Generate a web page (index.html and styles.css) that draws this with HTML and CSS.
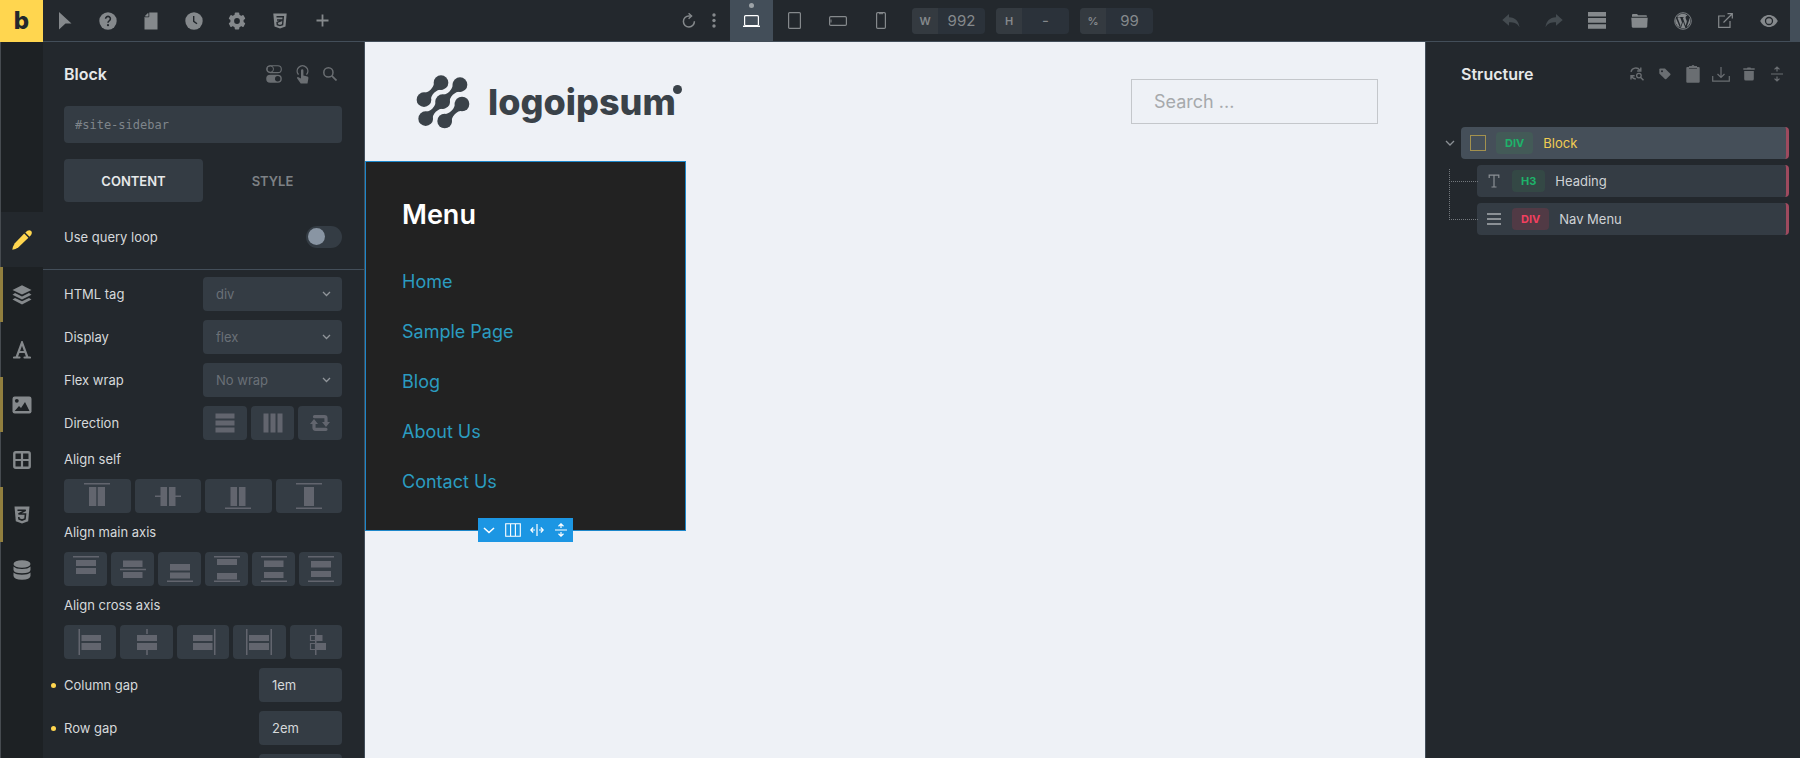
FILE: index.html
```html
<!DOCTYPE html>
<html lang="en">
<head>
<meta charset="utf-8">
<title>Builder</title>
<link rel="stylesheet" href="styles.css">
</head>
<body>
<div class="app">
  <header class="topbar">
    <div class="bar-group">
      <a class="brand" href="#">b</a>
      <button class="bar-btn" aria-label="Select"><svg width="14" height="18" viewBox="0 0 14 18"><path d="M1 0 13.500 11.500 7.500 11.500 1 17.500z" fill="currentColor"/></svg></button>
      <button class="bar-btn" aria-label="Help"><svg width="18" height="18" viewBox="0 0 18 18"><circle cx="9" cy="9" r="8.700" fill="currentColor"/><path d="M6.600 6.800a2.400 2.400 0 1 1 3.600 2.100c-.8.500-1.200.9-1.200 1.900" fill="none" stroke="#23282d" stroke-width="1.600"/><circle cx="9" cy="13.200" r="1.100" fill="#23282d"/></svg></button>
      <button class="bar-btn" aria-label="Pages"><svg width="14" height="18" viewBox="0 0 14 18"><path d="M5.500 0.500H13.500V17.500H.5V5.500z" fill="currentColor"/><path d="M4.800 1v3.800H1" fill="none" stroke="#23282d" stroke-width=".9"/><path d="M4.200.700v3.500H.7z" fill="currentColor"/></svg></button>
      <button class="bar-btn" aria-label="History"><svg width="18" height="18" viewBox="0 0 18 18"><circle cx="9" cy="9" r="8.700" fill="currentColor"/><path d="M8.700 4v5.300l3.300 2.500" fill="none" stroke="#23282d" stroke-width="1.400"/></svg></button>
      <button class="bar-btn" aria-label="Settings"><svg width="18" height="18" viewBox="0 0 18 18"><g fill="currentColor"><circle cx="9" cy="9" r="6.700"/><rect x="6.700" y=".5" width="4.600" height="17" rx="1"/><rect x="6.700" y=".5" width="4.600" height="17" rx="1" transform="rotate(60 9 9)"/><rect x="6.700" y=".5" width="4.600" height="17" rx="1" transform="rotate(120 9 9)"/></g><circle cx="9" cy="9" r="2.900" fill="#23282d"/></svg></button>
      <button class="bar-btn" aria-label="Stylesheets"><svg width="14" height="16" viewBox="0 0 14 16"><path d="M.3.500h13.400L12.500 13.500 7 15.500 1.500 13.500z" fill="currentColor"/><path d="M3.500 3.700h6.800l-.7 8-2.700.9-2.600-.9-.2-2.300 4.500-1.800M10 7H4" fill="none" stroke="#23282d" stroke-width="1.400"/></svg></button>
      <button class="bar-btn" aria-label="Add"><svg width="13" height="13" viewBox="0 0 13 13"><path d="M6.500.5v12M.5 6.500h12" stroke="currentColor" stroke-width="1.800"/></svg></button>
    </div>

    <div class="bar-group">
      <button class="mini-btn" aria-label="Reload"><svg width="14" height="15" viewBox="0 0 14 15"><path d="M12.400 8.300A5.500 5.500 0 1 1 7 3h2.300" fill="none" stroke="currentColor" stroke-width="1.500"/><path d="M6.600.3 9.600 3 6.600 5.700" fill="none" stroke="currentColor" stroke-width="1.400"/></svg></button>
      <button class="mini-btn dots" aria-label="More"><svg width="4" height="15" viewBox="0 0 4 15"><g fill="currentColor"><circle cx="2" cy="2" r="1.700"/><circle cx="2" cy="7.500" r="1.700"/><circle cx="2" cy="13" r="1.700"/></g></svg></button>
      <button class="bar-btn active" aria-label="Desktop"><svg width="17" height="12" viewBox="0 0 17 12"><rect x="1.600" y=".7" width="13.800" height="9.800" rx="1" fill="none" stroke="currentColor" stroke-width="1.200"/><path d="M0 11.300h17" stroke="currentColor" stroke-width="1.400"/></svg></button>
      <button class="bar-btn" aria-label="Tablet"><svg width="13" height="17" viewBox="0 0 13 17"><rect x=".6" y=".6" width="11.800" height="15.800" rx="1" fill="none" stroke="currentColor" stroke-width="1.200"/></svg></button>
      <button class="bar-btn" aria-label="Mobile landscape"><svg width="18" height="10" viewBox="0 0 18 10"><rect x=".6" y=".6" width="16.800" height="8.800" rx="1.200" fill="none" stroke="currentColor" stroke-width="1.200"/><path d="M2 3.500v3" stroke="currentColor"/></svg></button>
      <button class="bar-btn" aria-label="Mobile portrait"><svg width="10" height="17" viewBox="0 0 10 17"><rect x=".6" y=".6" width="8.800" height="15.800" rx="1.200" fill="none" stroke="currentColor" stroke-width="1.200"/><path d="M3 1.700h4" stroke="currentColor"/></svg></button>
      <div class="sizes">
        <label class="size"><span>W</span><input type="text" value="992"></label>
        <label class="size"><span>H</span><input type="text" value="-"></label>
        <label class="size"><span>%</span><input type="text" value="99"></label>
      </div>
    </div>

    <div class="bar-group">
      <button class="bar-btn faded" aria-label="Undo"><svg width="18" height="14" viewBox="0 0 18 14"><path d="M7 0v3.300c6.500.3 9.600 3.800 10.500 9.900C15.300 9.600 12.300 8.300 7 8.300v3.500L.3 5.900z" fill="currentColor"/></svg></button>
      <button class="bar-btn faded" aria-label="Redo"><svg width="18" height="14" viewBox="0 0 18 14"><path d="M11 0v3.300C4.500 3.600 1.400 7.100.5 13.200 2.700 9.600 5.700 8.300 11 8.300v3.500l6.700-5.900z" fill="currentColor"/></svg></button>
      <button class="bar-btn" aria-label="Structure"><svg width="18" height="17" viewBox="0 0 18 17"><path d="M0 0h18v4.500H0zM0 6h18v4.700H0zM0 12.200h18v4.500H0z" fill="currentColor"/></svg></button>
      <button class="bar-btn" aria-label="Templates"><svg width="17" height="14" viewBox="0 0 17 14"><path d="M1 2.700V1q0-1 1-1h4l1.200 1.300H15q1 0 1 1.400z" fill="currentColor"/><path d="M.3 3.700h16.400l-.5 8.800q-.1 1.200-1.300 1.200H2.100q-1.200 0-1.300-1.200z" fill="currentColor"/></svg></button>
      <a class="bar-btn" href="#" aria-label="WordPress"><svg width="18" height="18" viewBox="0 0 18 18"><circle cx="9" cy="9" r="8.300" fill="none" stroke="currentColor" stroke-width=".9"/><path d="M1.900 6 6 16.300 8 10.300 6.200 5.600 5.200 5.500V4.900H9.900V5.500L8.700 5.600 11.600 13.800 12.700 10.200C13.200 8.500 11.700 7.300 11.600 5.700 11.500 4.500 12.400 3.500 13.600 3.400A7.200 7.200 0 0 0 3 4.900H4.800L4.600 5.500 3.400 5.600 6.400 13.300 6 16zM9.100 9.700 6.900 16A7.200 7.200 0 0 0 11.400 16zM15.400 5.600A7.200 7.200 0 0 1 12.600 15.200L15 8.500Q15.500 7 15.400 5.600zM1.900 6A7.200 7.200 0 0 0 5.900 15.500z" fill="currentColor"/></svg></a>
      <a class="bar-btn" href="#" aria-label="Open page"><svg width="15" height="15" viewBox="0 0 15 15"><path d="M7 3H.700v11.300H12V8M9.500.700h4.800v4.800M14 1 5.500 9.500" fill="none" stroke="currentColor" stroke-width="1.200"/></svg></a>
      <button class="bar-btn" aria-label="Preview"><svg width="18" height="12" viewBox="0 0 18 12"><path d="M.2 6C2 2.200 5.300 0 9 0s7 2.200 8.800 6c-1.800 3.800-5.100 6-8.800 6S2 9.800.2 6z" fill="currentColor"/><circle cx="9" cy="6" r="3.500" fill="none" stroke="#23282d" stroke-width="1.300"/></svg></button>
      <span class="save-edge"></span>
    </div>
  </header>

  <nav class="rail">
    <button class="rail-btn current" aria-label="Content"><svg width="20" height="20" viewBox="0 0 20 20"><g fill="currentColor"><path d="M12.200 3.600 16.400 7.800 6.500 17.200Q3.500 19.300.3 19.700.7 16.500 2.800 13.200z"/><path d="M13.300 2.500Q17-1.300 19.100 1.100 21.200 3.400 17.500 6.700z"/></g></svg></button>
    <button class="rail-btn marked" aria-label="Layout"><svg width="20" height="20" viewBox="0 0 20 20"><g fill="currentColor"><path d="M10 .3 19.500 5 10 9.500.500 5z"/><path d="M3 8.100.500 9.700 10 14.500 19.500 9.700 17 8.100 10 11.500z"/><path d="M3 12.900.500 14.600 10 19.400 19.500 14.600 17 12.900 10 16.300z"/></g></svg></button>
    <button class="rail-btn" aria-label="Typography"><svg width="18" height="18" viewBox="0 0 18 18"><path d="M3.700 16 9 1.500 14.300 16M5.500 11h7M1 16.500h5.500M11.500 16.500H17" fill="none" stroke="currentColor" stroke-width="2.200" stroke-linecap="round"/></svg></button>
    <button class="rail-btn marked" aria-label="Background"><svg width="20" height="18" viewBox="0 0 20 18"><rect x=".5" y=".5" width="19" height="17" rx="2.200" fill="currentColor"/><circle cx="4.800" cy="4.800" r="1.900" fill="#1d2124"/><path d="M2.700 15 7 10l2 2 4-6 4.500 9z" fill="#1d2124"/></svg></button>
    <button class="rail-btn" aria-label="Border"><svg width="18" height="18" viewBox="0 0 18 18"><rect x="1.300" y="1.300" width="15.400" height="15.400" rx="1.500" fill="none" stroke="currentColor" stroke-width="2.400"/><path d="M9 1v16M1 9h16" stroke="currentColor" stroke-width="2.200"/></svg></button>
    <button class="rail-btn marked" aria-label="CSS"><svg width="16" height="18" viewBox="0 0 16 18"><path d="M.5.500h15L14.200 15.200 8 17.500 1.800 15.200z" fill="currentColor"/><path d="M3.500 4.200h8.200L4.500 8h7l-.5 5-3 1.100L5 13l-.2-2" fill="none" stroke="#1d2124" stroke-width="1.600"/></svg></button>
    <button class="rail-btn" aria-label="Attributes"><svg width="18" height="20" viewBox="0 0 18 20"><g fill="currentColor"><ellipse cx="9" cy="4" rx="8.500" ry="3.800"/><path d="M.5 6.500Q3 9 9 9t8.500-2.500V10Q17 13.300 9 13.300T.5 10z"/><path d="M.5 12.500Q3 14.700 9 14.700t8.500-2.200V16Q17 19.700 9 19.700T.5 16z"/></g></svg></button>
  </nav>

  <aside class="panel">
    <div class="panel-head">
      <h2>Block</h2>
      <div class="head-icons">
        <button aria-label="Conditions"><svg width="16" height="18" viewBox="0 0 16 18"><rect x=".7" y=".7" width="14.600" height="6.900" rx="3.400" fill="none" stroke="currentColor" stroke-width="1.100"/><circle cx="4.300" cy="4.100" r="3.200" fill="none" stroke="currentColor"/><rect x=".2" y="9.800" width="15.600" height="8" rx="4" fill="currentColor"/><circle cx="11.700" cy="13.800" r="2.700" fill="#23282d"/></svg></button>
        <button aria-label="Interactions"><svg width="13" height="19" viewBox="0 0 13 19"><path d="M2.500 9.600A5.300 5.300 0 1 1 10.500 9.600" fill="none" stroke="currentColor" stroke-width="1.400"/><path d="M5 5.500q0-1.200 1.200-1.200t1.200 1.200v5l4 1q1.200.4 1 1.700L11.500 18.500H4.700L.9 13q.3-1.200 1.600-.8L5 13.500z" fill="currentColor"/></svg></button>
        <button aria-label="Search"><svg width="14" height="14" viewBox="0 0 14 14"><circle cx="5.400" cy="5.400" r="4.600" fill="none" stroke="currentColor" stroke-width="1.500"/><path d="m8.800 8.800 4.700 4.700" stroke="currentColor" stroke-width="1.700"/></svg></button>
      </div>
    </div>
    <input class="field id-field" type="text" placeholder="#site-sidebar" aria-label="Element ID">
    <div class="tabs">
      <button class="tab on">CONTENT</button>
      <button class="tab">STYLE</button>
    </div>
    <div class="loop-row">
      <label for="loop">Use query loop</label>
      <input class="switch" type="checkbox" id="loop">
    </div>

    <div class="controls">
      <div class="row"><label for="tag">HTML tag</label><div class="pick"><select id="tag"><option>div</option></select><svg width="9" height="6" viewBox="0 0 9 6"><path d="m1 1 3.500 3.500L8 1" fill="none" stroke="currentColor" stroke-width="1.300"/></svg></div></div>
      <div class="row"><label for="display">Display</label><div class="pick"><select id="display"><option>flex</option></select><svg width="9" height="6" viewBox="0 0 9 6"><path d="m1 1 3.500 3.500L8 1" fill="none" stroke="currentColor" stroke-width="1.300"/></svg></div></div>
      <div class="row"><label for="wrap">Flex wrap</label><div class="pick"><select id="wrap"><option>No wrap</option></select><svg width="9" height="6" viewBox="0 0 9 6"><path d="m1 1 3.500 3.500L8 1" fill="none" stroke="currentColor" stroke-width="1.300"/></svg></div></div>
      <div class="row"><span>Direction</span>
        <div class="set half">
          <button aria-label="Column"><svg width="20" height="20" viewBox="0 0 20 20"><path d="M.5.500h19v5H.5zM.5 7.500h19v5H.5zM.5 14.500h19v5H.5z" fill="currentColor"/></svg></button>
          <button aria-label="Row"><svg width="20" height="20" viewBox="0 0 20 20"><path d="M.5.500h5v19h-5zM7.500.500h5v19h-5zM14.500.500h5v19h-5z" fill="currentColor"/></svg></button>
          <button aria-label="Reverse"><svg width="20" height="18" viewBox="0 0 20 18"><path d="M4.500 2.700h10q1.500 0 1.500 1.500V9M16 15.300H5.500Q4 15.300 4 13.800V9" fill="none" stroke="currentColor" stroke-width="3.200" stroke-linecap="round"/><path d="M12 8h8l-4 5zM0 10h8L4 5z" fill="currentColor"/></svg></button>
        </div>
      </div>
      <div class="stack"><span>Align self</span>
        <div class="set">
          <button aria-label="Start"><svg width="26" height="26" viewBox="0 0 26 26"><path d="M0 0h26v1.500H0zM5 4h7.300v19H5zM13.700 4H21v19h-7.300z" fill="currentColor"/></svg></button>
          <button aria-label="Center"><svg width="26" height="26" viewBox="0 0 26 26"><path d="M0 12.500h5.500v1.500H0zM20.500 12.500H26v1.500h-5.500zM5.500 4H12v19H5.500zM14 4h6.500v19H14z" fill="currentColor"/></svg></button>
          <button aria-label="End"><svg width="26" height="26" viewBox="0 0 26 26"><path d="M0 24.500h26V26H0zM5.500 4H12v19H5.500zM14 4h6.500v19H14z" fill="currentColor"/></svg></button>
          <button aria-label="Stretch"><svg width="26" height="26" viewBox="0 0 26 26"><path d="M0 0h26v1.500H0zM0 24.500h26V26H0zM8 4h10v19H8z" fill="currentColor"/></svg></button>
        </div>
      </div>
      <div class="stack"><span>Align main axis</span>
        <div class="set">
          <button aria-label="Start"><svg width="26" height="26" viewBox="0 0 26 26"><path d="M0 0h26v1.500H0zM3 4h20v6H3zM3 12h20v6H3z" fill="currentColor"/></svg></button>
          <button aria-label="Center"><svg width="26" height="26" viewBox="0 0 26 26"><path d="M0 12.700h26v1.500H0zM3 4.500h19.500v6.500H3zM3 16h19.500v6H3z" fill="currentColor"/></svg></button>
          <button aria-label="End"><svg width="26" height="26" viewBox="0 0 26 26"><path d="M0 24.500h26V26H0zM3 8h20v6.500H3zM3 16.500h20v6H3z" fill="currentColor"/></svg></button>
          <button aria-label="Space between"><svg width="26" height="26" viewBox="0 0 26 26"><path d="M0 0h26v1.500H0zM0 24.500h26V26H0zM3 3h20v6H3zM3 17h20v6.500H3z" fill="currentColor"/></svg></button>
          <button aria-label="Space around"><svg width="26" height="26" viewBox="0 0 26 26"><path d="M0 0h26v1.500H0zM0 24.500h26V26H0zM3 4.500h19.500v6.500H3zM3 16h19.500v6H3z" fill="currentColor"/></svg></button>
          <button aria-label="Space evenly"><svg width="26" height="26" viewBox="0 0 26 26"><path d="M0 0h26v1.500H0zM0 24.500h26V26H0zM3 5h20v6.500H3zM3 15h20v6H3z" fill="currentColor"/></svg></button>
        </div>
      </div>
      <div class="stack"><span>Align cross axis</span>
        <div class="set">
          <button aria-label="Start"><svg width="26" height="26" viewBox="0 0 26 26"><path d="M1.500 0H3v26H1.500zM4.500 6H24v6H4.500zM4.500 14H24v7H4.500z" fill="currentColor"/></svg></button>
          <button aria-label="Center"><svg width="26" height="26" viewBox="0 0 26 26"><path d="M12.200 0h1.600v5h-1.600zM12.200 21h1.600v5h-1.600zM3 6h20v6H3zM3 14h20v7H3z" fill="currentColor"/></svg></button>
          <button aria-label="End"><svg width="26" height="26" viewBox="0 0 26 26"><path d="M24 0h1.500v26H24zM3 6h19.500v6H3zM3 14h19.500v7H3z" fill="currentColor"/></svg></button>
          <button aria-label="Stretch"><svg width="26" height="26" viewBox="0 0 26 26"><path d="M0 0h1.500v26H0zM24.500 0H26v26h-1.500zM3 6h20v6H3zM3 14h20v7H3z" fill="currentColor"/></svg></button>
          <button aria-label="Baseline"><svg width="26" height="26" viewBox="0 0 26 26"><path d="M12 0h1.500v26H12zM13 6h6.500v6H13zM13 14h10v7H13z" fill="currentColor"/><path d="M7.500 6.500h5v5h-5zM7.500 14.500h5v6h-5z" fill="none" stroke="currentColor" stroke-width="1.200"/></svg></button>
        </div>
      </div>
      <div class="row changed"><label for="colgap">Column gap</label><input class="field small" id="colgap" type="text" value="1em"></div>
      <div class="row changed"><label for="rowgap">Row gap</label><input class="field small" id="rowgap" type="text" value="2em"></div>
      <div class="row end"><input class="field small" type="text" aria-label="Flex grow"></div>
    </div>
  </aside>

  <main class="canvas">
    <div class="site-head">
      <a class="logo" href="#">
        <svg width="54" height="54" viewBox="34 28 160 162"><g fill="currentColor"><circle cx="108" cy="51" r="22"/><circle cx="165" cy="57" r="22"/><circle cx="57" cy="102" r="22"/><circle cx="113" cy="108" r="22"/><circle cx="171" cy="115" r="22"/><circle cx="62" cy="159" r="22"/><circle cx="119" cy="166" r="22"/>
        <path transform="translate(57 102) rotate(-45)" d="M10-19Q20-7 36-7T62-19V19Q52 7 36 7T10 19z"/>
        <path transform="translate(113 108) rotate(-45)" d="M10-19Q20-7 36-7T62-19V19Q52 7 36 7T10 19z"/>
        <path transform="translate(62 159) rotate(-45)" d="M10-19Q20-7 36-7T62-19V19Q52 7 36 7T10 19z"/>
        <path transform="translate(119 166) rotate(-45)" d="M10-19Q20-7 36-7T62-19V19Q52 7 36 7T10 19z"/></g></svg>
        <span class="wordmark">logoipsum</span>
      </a>
      <input class="site-search" type="search" placeholder="Search ..." aria-label="Search">
    </div>
    <section class="site-sidebar">
      <h3>Menu</h3>
      <a href="#">Home</a>
      <a href="#">Sample Page</a>
      <a href="#">Blog</a>
      <a href="#">About Us</a>
      <a href="#">Contact Us</a>
      <div class="quick">
        <button aria-label="Collapse"><svg width="12" height="7" viewBox="0 0 12 7"><path d="m1 1 5 4.500L11 1" fill="none" stroke="currentColor" stroke-width="1.600"/></svg></button>
        <button aria-label="Columns"><svg width="16" height="14" viewBox="0 0 16 14"><path d="M.7.700h14.600v12.600H.7zM5.600 1v12M10.400 1v12" fill="none" stroke="currentColor" stroke-width="1.100"/></svg></button>
        <button aria-label="Width"><svg width="14" height="14" viewBox="0 0 14 14"><path d="M7 1v12M5 7H.8M9 7h4.200M3.200 4.500.8 7l2.400 2.500M10.800 4.500 13.200 7l-2.400 2.500" fill="none" stroke="currentColor" stroke-width="1.200"/></svg></button>
        <button aria-label="Height"><svg width="14" height="14" viewBox="0 0 14 14"><path d="M1 7h12M7 5V.8M7 9v4.200M4.500 3.200 7 .8l2.500 2.400M4.500 10.800 7 13.200l2.500-2.400" fill="none" stroke="currentColor" stroke-width="1.200"/></svg></button>
      </div>
    </section>
  </main>

  <aside class="structure">
    <div class="panel-head">
      <h2>Structure</h2>
      <div class="head-icons tools">
        <button aria-label="Find and replace"><svg width="14" height="14" viewBox="0 0 14 14"><path d="M1 4.800A4.900 4.900 0 0 1 9.800 3.200M10.800.500V4H7.200M1 12.500V8.700h3.600M1.400 9.200Q2.800 11.800 5.800 12" fill="none" stroke="currentColor" stroke-width="1.400"/><circle cx="8.900" cy="8.600" r="2.300" fill="none" stroke="currentColor" stroke-width="1.300"/><path d="m10.500 10.300 3 3" stroke="currentColor" stroke-width="1.500"/></svg></button>
        <button aria-label="Classes"><svg width="12" height="12" viewBox="0 0 12 12"><path d="M.3 1.500Q.3.500 1.300.500H6l5.300 5.200q.6.700 0 1.400L7.300 11q-.7.600-1.400 0L.3 5.500z" fill="currentColor"/><circle cx="3" cy="3.200" r="1" fill="#23282d"/></svg></button>
        <button aria-label="Paste"><svg width="14" height="18" viewBox="0 0 14 18"><path d="M.3 3q0-1 1-1H3V1h2.500Q7-.8 8.500 1H11v1h1.700q1 0 1 1v13.700q0 1-1 1H1.300q-1 0-1-1z" fill="currentColor"/><path d="M3 3.500h8" stroke="#23282d" stroke-width=".6"/></svg></button>
        <button aria-label="Save"><svg width="18" height="15" viewBox="0 0 18 15"><path d="M.7 9v5.200h16.600V9M9 0v10.300M5.500 7 9 10.500 12.500 7" fill="none" stroke="currentColor" stroke-width="1.200"/></svg></button>
        <button aria-label="Delete"><svg width="12" height="14" viewBox="0 0 12 14"><path d="M.3 1.300h3.700L4.500.400h3l.5.900h3.700v1.400H.3zM1.200 4h9.600v8q0 1.500-1.500 1.500H2.700Q1.200 13.500 1.200 12z" fill="currentColor"/></svg></button>
        <button aria-label="Expand"><svg width="14" height="16" viewBox="0 0 14 16"><path d="M1 8h12M7 5.500V1M7 10.500V15M4.500 3.400 7 1l2.500 2.400M4.500 12.600 7 15l2.500-2.400" fill="none" stroke="currentColor" stroke-width="1.200"/></svg></button>
      </div>
    </div>
    <ul class="tree">
      <li class="node selected"><svg class="fold" width="10" height="7" viewBox="0 0 10 7"><path d="m1 1 4 4 4-4" fill="none" stroke="currentColor" stroke-width="1.300"/></svg><span class="square"></span><span class="chip">DIV</span>Block</li>
      <li class="node child first"><svg width="12" height="14" viewBox="0 0 12 14"><path d="M1.200 4V1.200h9.600V4M6 1.200v11.600M3.500 13h5" fill="none" stroke="currentColor" stroke-width="1.200"/></svg><span class="chip">H3</span>Heading</li>
      <li class="node child"><svg width="14" height="12" viewBox="0 0 14 12"><path d="M0 1h14M0 6h14M0 11h14" stroke="currentColor" stroke-width="1.900"/></svg><span class="chip red">DIV</span>Nav Menu</li>
    </ul>
  </aside>
</div>
</body>
</html>
```

FILE: styles.css
```css
* { box-sizing: border-box; }

body {
  margin: 0;
  font-family: Inter, "Liberation Sans", sans-serif;
  font-size: 13px;
  color: #d6d9db;
  background: #23282d;
}

button, input, select {
  font: inherit;
  color: inherit;
  border: 0;
  padding: 0;
  background: none;
  border-radius: 0;
}

a { text-decoration: none; color: inherit; }
svg { display: block; flex: none; }
h2, h3, ul { margin: 0; padding: 0; }

.app {
  display: grid;
  grid-template: auto minmax(0, 1fr) / 43px 322px minmax(0, 1fr) 375px;
  height: 100vh;
  overflow: hidden;
}

/* Top bar */
.topbar {
  grid-column: 1 / -1;
  display: flex;
  justify-content: space-between;
  height: 42px;
  border-bottom: 1px solid #434e59;
  color: #85898c;
}
.bar-group { display: flex; align-items: stretch; }
.brand {
  display: flex;
  align-items: center;
  justify-content: center;
  width: 43px;
  height: 42px;
  background: #ffd64f;
  color: #23282d;
  font-size: 24px;
  font-weight: 800;
  line-height: 24px;
}
.bar-btn, .mini-btn {
  display: flex;
  align-items: center;
  justify-content: center;
  width: 43px;
}
.mini-btn { width: 26px; }
.mini-btn.dots { width: 23px; margin-right: 5px; }
.bar-btn.active {
  position: relative;
  background: #434e59;
  color: #fff;
}
.bar-btn.active::before {
  content: "";
  position: absolute;
  top: 3px;
  left: 19px;
  width: 5px;
  height: 5px;
  border-radius: 50%;
  background: #9da3a8;
}
.bar-btn.faded { color: #444b50; }
.sizes {
  display: flex;
  align-items: center;
  gap: 11px;
  padding: 0 4px 0 10px;
}
.size {
  display: flex;
  width: 73px;
  height: 26px;
  border-radius: 4px;
  overflow: hidden;
  background: #2b323a;
}
.size span {
  flex: 0 0 26px;
  background: #343a40;
  font-size: 11px;
  font-weight: 600;
  line-height: 26px;
  text-align: center;
}
.size input {
  width: 0;
  flex: 1;
  font-size: 15px;
  text-align: center;
}
.save-edge { width: 10px; background: #434e59; }

/* Icon rail */
.rail {
  padding-top: 170px;
  background: #1d2124;
  border-left: 1px solid #464b50;
  color: #85898c;
}
.rail-btn {
  position: relative;
  display: flex;
  align-items: center;
  justify-content: center;
  width: 100%;
  height: 55px;
}
.rail-btn.current { background: #23282d; color: #ffd64f; }
.rail-btn.marked::before {
  content: "";
  position: absolute;
  inset: 0 auto 0 -1px;
  width: 3px;
  background: #917f3e;
}

/* Element panel */
.panel {
  overflow: hidden;
  border-right: 1px solid #434e59;
}
.panel-head {
  display: flex;
  align-items: center;
  justify-content: space-between;
  height: 64px;
  padding: 0 20px 0 21px;
}
.panel-head h2 {
  font-size: 16px;
  font-weight: 600;
  color: #e6e8e9;
}
.head-icons { display: flex; color: #6a6e72; }
.head-icons button {
  display: flex;
  align-items: center;
  justify-content: center;
  width: 28px;
  height: 28px;
}
.field {
  height: 34px;
  border-radius: 4px;
  background: #343c44;
}
.id-field {
  display: block;
  width: calc(100% - 43px);
  height: 37px;
  margin: 0 22px 0 21px;
  padding: 0 11px;
  font-family: "DejaVu Sans Mono", monospace;
  font-size: 12px;
}
.id-field::placeholder { color: #7f858b; }
.tabs { display: flex; margin: 16px 22px 0 21px; }
.tab {
  flex: 1;
  height: 43px;
  border-radius: 4px;
  color: #7d8185;
  font-weight: 600;
}
.tab.on { background: #343c44; color: #e6e8e9; }
.loop-row {
  display: flex;
  align-items: center;
  justify-content: space-between;
  height: 68px;
  padding: 2px 22px 0 21px;
  border-bottom: 1px solid #434e59;
}
.switch {
  appearance: none;
  display: flex;
  align-items: center;
  width: 36px;
  height: 22px;
  margin: 0;
  padding: 2px;
  border-radius: 11px;
  background: #343c44;
}
.switch::before {
  content: "";
  width: 17px;
  height: 17px;
  border-radius: 50%;
  background: #8995a3;
}
.controls {
  display: flex;
  flex-direction: column;
  gap: 9px;
  padding: 7px 22px 0 21px;
}
.row {
  position: relative;
  display: flex;
  align-items: center;
  justify-content: space-between;
  height: 34px;
}
.row.end { justify-content: flex-end; }
.row.changed::before {
  content: "";
  position: absolute;
  left: -13px;
  width: 5px;
  height: 5px;
  border-radius: 50%;
  background: #ffd64f;
}
.pick {
  display: flex;
  align-items: center;
  width: 50%;
  height: 34px;
  padding-right: 11px;
  border-radius: 4px;
  background: #343c44;
  color: #90959a;
}
.pick select {
  appearance: none;
  flex: 1;
  height: 34px;
  padding-left: 13px;
  color: #6a7077;
}
.set { display: flex; gap: 4px; }
.set.half { width: 50%; }
.set button {
  display: flex;
  align-items: center;
  justify-content: center;
  flex: 1;
  height: 34px;
  border-radius: 4px;
  background: #343c44;
  color: #62656e;
}
.stack > span {
  display: block;
  padding: 2px 0 12px;
  line-height: 16px;
}
.small { width: 83px; padding: 0 13px; }

/* Page preview */
.canvas {
  overflow: hidden;
  background: #eef1f6;
  color: #3a4249;
}
.site-head {
  display: flex;
  align-items: center;
  justify-content: space-between;
  height: 119px;
  padding: 0 47px 0 51px;
}
.logo { display: flex; align-items: center; gap: 18px; }
.wordmark {
  position: relative;
  padding-right: 6px;
  font-size: 36px;
  font-weight: 800;
  line-height: 44px;
}
.wordmark::after {
  content: "";
  position: absolute;
  top: 5px;
  right: 0;
  width: 9px;
  height: 9px;
  border-radius: 50%;
  background: #3a4249;
}
.site-search {
  appearance: none;
  width: 247px;
  height: 45px;
  padding: 0 22px;
  border: 1px solid #c4c7cb;
  font-size: 18px;
}
.site-search::placeholder { color: #a6a9ac; }
.site-sidebar {
  position: relative;
  display: flex;
  flex-direction: column;
  align-items: flex-start;
  gap: 23px;
  width: 321px;
  padding: 36px 36px 35px;
  border: 1px solid #1c87ca;
  background: #222;
  color: #2b9cc0;
  font-size: 18px;
  line-height: 27px;
}
.site-sidebar h3 {
  margin-bottom: 13px;
  color: #fff;
  font-size: 27px;
  font-weight: 600;
  line-height: 34px;
}
.quick {
  position: absolute;
  bottom: -12px;
  left: 50%;
  display: flex;
  width: 95px;
  height: 24px;
  margin-left: -48px;
  background: #1c96e3;
  color: #fff;
}
.quick button {
  display: flex;
  flex: 1;
  align-items: center;
  justify-content: center;
}

/* Structure */
.structure { border-left: 1px solid #434e59; }
.structure .panel-head { padding: 0 9px 0 35px; }
.tree {
  display: flex;
  flex-direction: column;
  gap: 6px;
  padding: 21px 11px 0 35px;
  list-style: none;
}
.node {
  position: relative;
  display: flex;
  align-items: center;
  gap: 10px;
  height: 32px;
  padding-left: 9px;
  border-right: 3px solid #9e4a5e;
  border-radius: 4px;
  background: #343c44;
  color: #cfd2d5;
}
.node svg { color: #8b9095; }
.node.selected { background: #454f59; color: #f2cd52; }
.node .fold { position: absolute; left: -16px; }
.node.child { margin-left: 16px; }
.node.child svg { margin: 0 1px; }
.node.child::before {
  content: "";
  position: absolute;
  bottom: 15px;
  left: -28px;
  width: 28px;
  height: 38px;
  border: 1px dotted #74797e;
  border-width: 0 0 1px 1px;
}
.node.child.first::before { height: 12px; }
.node.child.first svg { margin: 0 2px; }
.square {
  width: 16px;
  height: 16px;
  border: 1px solid #a3914e;
}
.chip {
  padding: 0 9px;
  border-radius: 4px;
  background: #435a57;
  color: #1eb36a;
  font-size: 11px;
  font-weight: 700;
  line-height: 22px;
}
.child .chip { background: #344845; }
.child .chip.red { background: #513a45; color: #f3405f; }
```
